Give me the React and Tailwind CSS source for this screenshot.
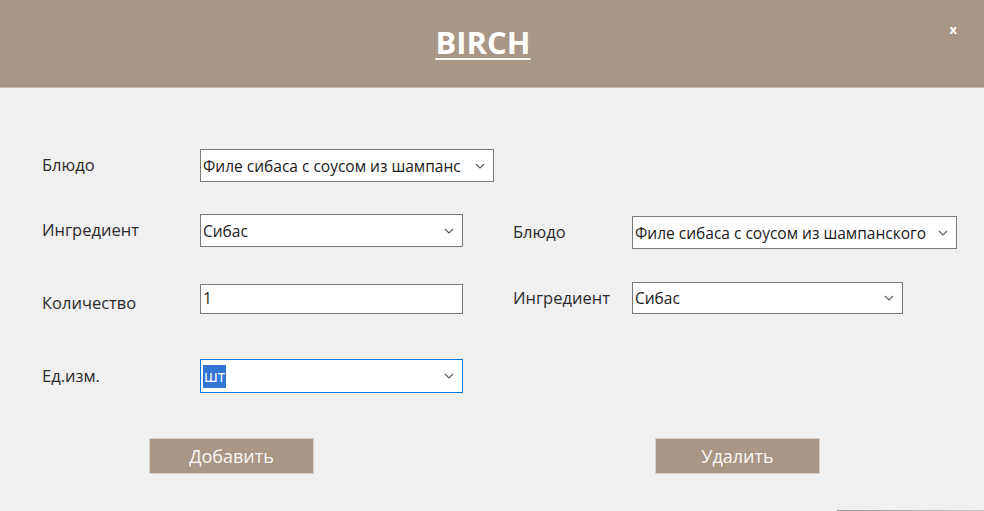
import React from 'react'

const font = { fontFamily: '"Open Sans", "Noto Sans", sans-serif' }

function Chevron() {
  return (
    <svg width="10" height="6" viewBox="0 0 10 6" className="shrink-0">
      <path d="M1 1l4 4 4-4" fill="none" stroke="#5a5a5a" strokeWidth="1.1" />
    </svg>
  )
}

function Combo({ value, w, h, focused, selected }) {
  return (
    <div
      className={`flex items-center bg-white border ${focused ? 'border-[#0078d7]' : 'border-[#7a7a7a]'} ${w} ${h} pl-[2px] pr-[8px]`}
    >
      <div className="flex-1 overflow-hidden whitespace-nowrap text-[15.5px] text-[#1a1a1a] leading-[22px]">
        {selected ? (
          <span className="inline-block bg-[#3377d6] text-white px-[1px] leading-[23px]">{value}</span>
        ) : value}
      </div>
      <Chevron />
    </div>
  )
}

function Row({ label, labelW, children, className = '' }) {
  return (
    <div className={`flex items-center ${className}`}>
      <div className={`${labelW} text-[16.5px] text-[#2b2b2b]`}>{label}</div>
      {children}
    </div>
  )
}

export default function App() {
  return (
    <div className="w-[984px] h-[511px] bg-[#f0f0f0] overflow-hidden flex flex-col" style={font}>
      {/* Header */}
      <div className="h-[88px] bg-[#a89686] border-b border-[#c9bcae] flex items-center justify-center relative shrink-0">
        <span className="text-white text-[31px] font-bold underline underline-offset-[4px] decoration-2 mr-[18px] mt-[-2px]">BIRCH</span>
        <span className="absolute right-[27px] top-[20px] text-white text-[13px] font-bold">x</span>
      </div>

      <div className="flex">
        {/* Left column */}
        <div className="w-[513px] pl-[42px] pt-[61px] flex flex-col">
          <Row label="Блюдо" labelW="w-[158px]">
            <Combo value="Филе сибаса с соусом из шампанс" w="w-[294px]" h="h-[33px]" />
          </Row>
          <Row label="Ингредиент" labelW="w-[158px]" className="mt-[32px]">
            <Combo value="Сибас" w="w-[263px]" h="h-[33px]" />
          </Row>
          <Row label="Количество" labelW="w-[158px] h-[30px] pt-[7px] leading-[23px]" className="mt-[37px]">
            <div className="w-[263px] h-[30px] bg-white border border-[#7a7a7a] flex items-center pl-[2px] text-[15.5px] text-[#1a1a1a]">1</div>
          </Row>
          <Row label="Ед.изм." labelW="w-[158px]" className="mt-[45px]">
            <Combo value="шт" w="w-[263px]" h="h-[34px]" focused selected />
          </Row>
        </div>

        {/* Right column */}
        <div className="flex flex-col pt-[128px]">
          <Row label="Блюдо" labelW="w-[119px]">
            <Combo value="Филе сибаса с соусом из шампанского" w="w-[325px]" h="h-[33px]" />
          </Row>
          <Row label="Ингредиент" labelW="w-[119px]" className="mt-[33px]">
            <Combo value="Сибас" w="w-[271px]" h="h-[32px]" />
          </Row>
        </div>
      </div>

      {/* Buttons */}
      <div className="flex mt-[45px] pl-[149px]">
        <button className="w-[165px] h-[36px] bg-[#a89686] border border-[#d9cfc6] text-[#f8f8f8] text-[18px]">Добавить</button>
        <button className="w-[165px] h-[36px] bg-[#a89686] border border-[#d9cfc6] text-[#f8f8f8] text-[18px] ml-[341px]">Удалить</button>
      </div>

      <div className="flex-1" />
      <div className="flex justify-end">
        <div className="w-[147px] h-[1px] bg-gradient-to-r from-[#9a9a9a] to-[#c8c8c8]" />
      </div>
    </div>
  )
}
